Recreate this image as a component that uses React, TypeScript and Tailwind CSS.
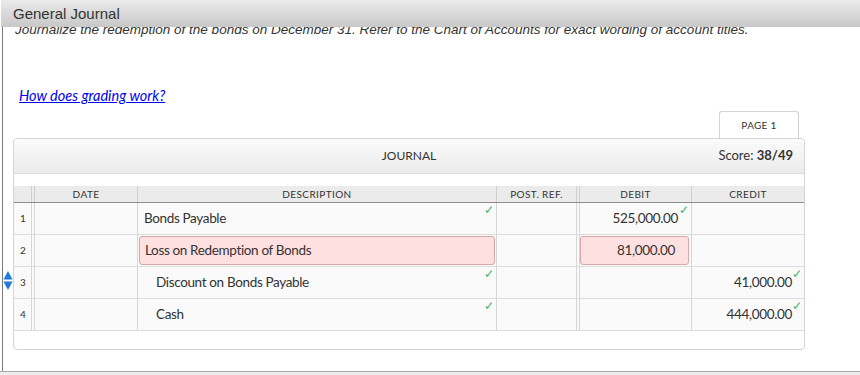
import React from 'react';

interface Row {
  num: number;
  description: string;
  indent?: boolean;
  debit?: string;
  credit?: string;
  descWrong?: boolean;
  debitWrong?: boolean;
  descOk?: boolean;
  debitOk?: boolean;
  creditOk?: boolean;
  arrows?: boolean;
}

const rows: Row[] = [
  { num: 1, description: 'Bonds Payable', debit: '525,000.00', descOk: true, debitOk: true },
  { num: 2, description: 'Loss on Redemption of Bonds', debit: '81,000.00', descWrong: true, debitWrong: true },
  { num: 3, description: 'Discount on Bonds Payable', indent: true, credit: '41,000.00', descOk: true, creditOk: true, arrows: true },
  { num: 4, description: 'Cash', indent: true, credit: '444,000.00', descOk: true, creditOk: true },
];

const cols = 'grid grid-cols-[21px_103px_359px_83px_112px_1fr]';

const Check = () => (
  <span className="absolute right-[2px] top-[1px] text-[12px] leading-none text-[#3bb46a]">✓</span>
);

const Arrows = () => (
  <svg className="absolute left-[-11px] top-[4px]" width="10" height="20" viewBox="0 0 10 20">
    <path d="M5 0 L9.5 8.5 L0.5 8.5 Z" fill="#1f78dc" />
    <path d="M0.5 10.5 L9.5 10.5 L5 19 Z" fill="#1f78dc" />
  </svg>
);

const App: React.FC = () => {
  return (
    <div className="w-[860px] h-[375px] bg-white overflow-hidden font-['Liberation_Sans',Arial,sans-serif]">
      <div className="relative z-10 ml-[1px] h-[27px] bg-gradient-to-b from-[#ebebeb] to-[#c8c8c8] pl-[12px] pt-[5px] text-[15px] leading-[18px] text-[#333]">
        General Journal
      </div>

      <div className="flow-root ml-[2px] h-[344px] border-l border-[#7a7a7a]">
        <p className="-mt-[6px] pl-[12px] text-[13.5px] italic leading-[18px] text-[#333]">
          Journalize the redemption of the bonds on December 31. Refer to the Chart of Accounts for exact wording of account titles.
        </p>

        <div className="mt-[48px] pl-[16px] font-['Lato',sans-serif] text-[14.5px] italic leading-[17px]">
          <a href="#" className="text-[#0000ee] underline">How does grading work?</a>
        </div>

        <div className="mt-[7px] ml-[10px] w-[792px] font-['Lato',sans-serif] text-[#333]">
          <div className="flex justify-end pr-[6px]">
            <div className="flex h-[27px] w-[80px] items-center justify-center rounded-t-[3px] border border-b-0 border-[#d4d4d4] bg-white text-[10px] tracking-[0.3px]">
              PAGE 1
            </div>
          </div>

          <div className="h-[212px] rounded-[4px] border border-[#d4d4d4] bg-white">
            <div className="relative flex h-[35px] items-center justify-center rounded-t-[4px] border-b border-[#dcdcdc] bg-gradient-to-b from-[#fbfbfb] to-[#ebebeb]">
              <span className="text-[12px]">JOURNAL</span>
              <span className="absolute right-[11px] text-[13px]">
                Score: <b>38/49</b>
              </span>
            </div>

            <div className="mt-[12px]">
              <div className={`${cols} h-[17px] border-b border-[#8c8c8c] bg-[#ebebeb] text-[10px] tracking-[0.4px]`}>
                <div className="border-r-4 border-double border-[#cfcfcf]" />
                <div className="flex items-center justify-center border-r border-[#cfcfcf]">DATE</div>
                <div className="flex items-center justify-center border-r border-[#cfcfcf]">DESCRIPTION</div>
                <div className="flex items-center justify-center border-r-4 border-double border-[#cfcfcf]">POST. REF.</div>
                <div className="flex items-center justify-center border-r border-[#cfcfcf]">DEBIT</div>
                <div className="flex items-center justify-center">CREDIT</div>
              </div>

              {rows.map((r) => (
                <div key={r.num} className={`${cols} h-[32px] border-b border-[#dcdcdc] bg-[#fafafa] text-[13.5px] tracking-[-0.35px]`}>
                  <div className="relative flex items-center border-r-4 border-double border-[#d6d6d6] pl-[6px] text-[10px] tracking-normal">
                    {r.arrows && <Arrows />}
                    {r.num}
                  </div>
                  <div className="border-r border-[#d6d6d6]" />
                  <div className="relative flex items-stretch border-r border-[#d6d6d6]">
                    {r.descWrong ? (
                      <div className="m-[1px] flex flex-1 items-center rounded-[3px] border border-[#d6a8a8] bg-[#ffe0e0] pl-[5px]">
                        {r.description}
                      </div>
                    ) : (
                      <div className={`flex flex-1 items-center ${r.indent ? 'pl-[18px]' : 'pl-[6px]'}`}>
                        {r.description}
                      </div>
                    )}
                    {r.descOk && <Check />}
                  </div>
                  <div className="border-r-4 border-double border-[#d6d6d6]" />
                  <div className="relative flex items-stretch border-r border-[#d6d6d6]">
                    {r.debitWrong ? (
                      <div className="my-[1px] mr-[2px] flex flex-1 items-center justify-end rounded-[3px] border border-[#d6a8a8] bg-[#ffe0e0] pr-[13px]">
                        {r.debit}
                      </div>
                    ) : (
                      <div className="flex flex-1 items-center justify-end pr-[13px]">{r.debit}</div>
                    )}
                    {r.debitOk && <Check />}
                  </div>
                  <div className="relative flex items-center justify-end pr-[12px]">
                    {r.credit}
                    {r.creditOk && <Check />}
                  </div>
                </div>
              ))}
            </div>
          </div>
        </div>
      </div>

      <div className="h-[4px] border-t border-[#a8a8a8] bg-[#ececec]" />
    </div>
  );
};

export default App;
